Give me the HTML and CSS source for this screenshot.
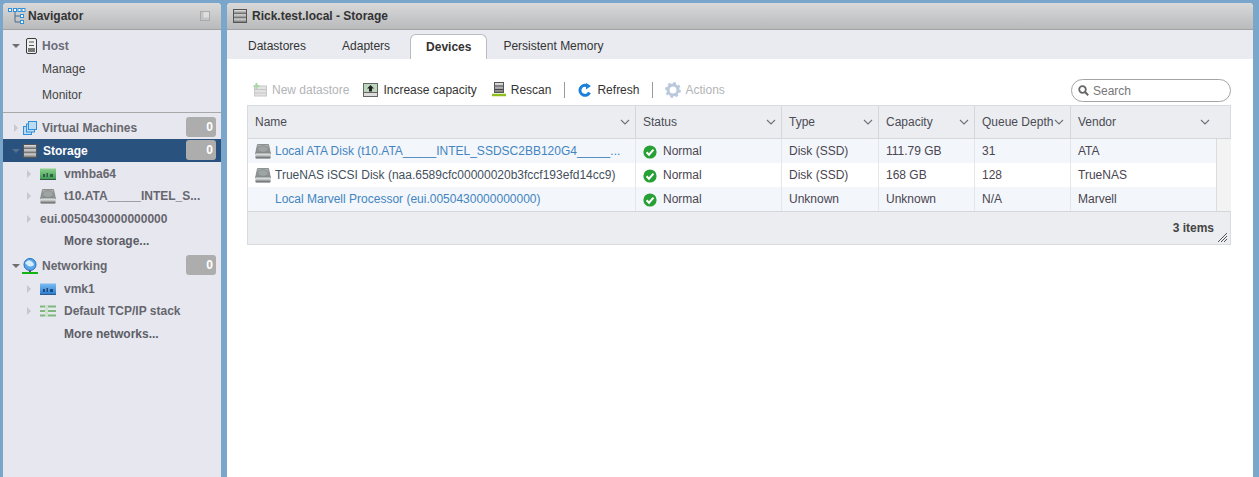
FILE: index.html
```html
<!DOCTYPE html>
<html lang="en">
<head>
<meta charset="utf-8">
<title>Rick.test.local - Storage</title>
<link rel="stylesheet" href="styles.css">
</head>
<body>
<svg class="defs" width="0" height="0" aria-hidden="true">
  <defs>
    <linearGradient id="disk" x1="0" y1="0" x2="0" y2="1"><stop offset="0" stop-color="#aeb3b3"/><stop offset="1" stop-color="#7f8585"/></linearGradient>
    <linearGradient id="diskb" x1="0" y1="0" x2="0" y2="1"><stop offset="0" stop-color="#eceeee"/><stop offset=".35" stop-color="#c9cccc"/><stop offset="1" stop-color="#555b5b"/></linearGradient>
    <linearGradient id="stack" x1="0" y1="0" x2="0" y2="1"><stop offset="0" stop-color="#e6e6e6"/><stop offset="1" stop-color="#7a7a7a"/></linearGradient>
    <linearGradient id="cg" x1="0" y1="0" x2="0" y2="1"><stop offset="0" stop-color="#8fd08f"/><stop offset="1" stop-color="#3f9f55"/></linearGradient>
    <linearGradient id="cb" x1="0" y1="0" x2="0" y2="1"><stop offset="0" stop-color="#7cbcf2"/><stop offset="1" stop-color="#2f7fd0"/></linearGradient>
    <symbol id="i-disk" viewBox="0 0 16 16">
      <path d="M2.500 1.500h11l2 9.500H.5z" fill="url(#disk)" stroke="#7b8080" stroke-width=".8"/>
      <ellipse cx="8" cy="6" rx="5.300" ry="3.300" fill="#9ea3a3" stroke="#83888a" stroke-width=".7"/>
      <rect x=".4" y="10.500" width="15.200" height="5" rx=".8" fill="url(#diskb)"/>
    </symbol>
    <symbol id="i-stack" viewBox="0 0 14 14">
      <rect x=".5" y=".5" width="13" height="13" fill="#666" stroke="#555"/>
      <rect x="1" y="1" width="12" height="3.500" fill="url(#stack)"/>
      <rect x="1" y="5.200" width="12" height="3.500" fill="url(#stack)"/>
      <rect x="1" y="9.400" width="12" height="3.600" fill="url(#stack)"/>
    </symbol>
    <symbol id="i-check" viewBox="0 0 14 14">
      <circle cx="7" cy="7" r="6.600" fill="#27a136"/>
      <path d="M3.600 7.200l2.400 2.500 4.500-5" fill="none" stroke="#fff" stroke-width="2"/>
    </symbol>
    <symbol id="i-caret" viewBox="0 0 10 6">
      <path d="M1 1l4 4 4-4" fill="none" stroke="#6c7378" stroke-width="1.100"/>
    </symbol>
    <symbol id="i-cardg" viewBox="0 0 16 12">
      <rect x="0" y=".5" width="16" height="10.500" fill="url(#cg)"/>
      <path d="M3 9h2V6H3zM6.500 9h1.500V5H6.500zM10 9h3V6h-3z" fill="#2f5f45"/>
      <path d="M0 11.500h16" stroke="#33574a"/>
    </symbol>
    <symbol id="i-cardb" viewBox="0 0 16 12">
      <rect x="0" y=".5" width="16" height="10.500" fill="url(#cb)"/>
      <path d="M3 9h2V6H3zM6.500 9h1.500V5H6.500zM10 9h3V6h-3z" fill="#1e4a80"/>
      <path d="M0 11.500h16" stroke="#2b5b90"/>
    </symbol>
  </defs>
</svg>

<aside class="nav">
  <header class="head nav-head">
    <svg class="head-icon" width="18" height="18" viewBox="0 0 18 18"><g fill="#fff" stroke="#2f8fd8"><rect x=".5" y="1.500" width="3" height="3"/><rect x="5.500" y="1.500" width="3" height="3"/><rect x="10" y="1.500" width="3" height="3"/><rect x="14" y="1.500" width="3" height="3"/><rect x="12.500" y="7.500" width="3" height="3"/><rect x="12.500" y="13.500" width="3" height="3"/></g><path d="M7 5v10h5M7 9h5" fill="none" stroke="#4a6d8c"/></svg>
    <span class="head-title">Navigator</span>
    <svg class="pin" width="10" height="10" viewBox="0 0 10 10"><rect x=".5" y=".5" width="9" height="9" fill="#c4c4c4" stroke="#aaa"/><path d="M3.500 1v5.500H9V1z" fill="#dedede"/></svg>
  </header>

  <section class="host">
    <div class="row h23 top">
      <span class="tri down"></span>
      <svg class="ic" width="11" height="16" viewBox="0 0 11 16"><rect x=".5" y=".5" width="10" height="15" rx="1.500" fill="#eef0f0" stroke="#3a3a3a"/><path d="M3 4h5M3 7.500h5" stroke="#555"/><rect x="2" y="10" width="7" height="4" fill="#777"/></svg>
      <span class="lbl">Host</span>
    </div>
    <div class="sub sub-manage">Manage</div>
    <div class="sub sub-monitor">Monitor</div>
  </section>

  <section class="tree">
    <div class="row h23">
      <span class="tri right"></span>
      <svg class="ic" width="14" height="14" viewBox="0 0 14 14"><g fill="#bcdcf6" stroke="#2f8fd8"><rect x=".5" y="5.500" width="8" height="8"/><rect x="3.500" y="3" width="8" height="8"/><rect x="5.500" y=".5" width="8" height="8"/></g></svg>
      <span class="lbl">Virtual Machines</span>
      <span class="badge">0</span>
    </div>
    <div class="row h23 selected">
      <span class="tri down sel-tri"></span>
      <svg class="ic" width="14" height="14"><use href="#i-stack"/></svg>
      <span class="lbl">Storage</span>
      <span class="badge">0</span>
    </div>
    <div class="row child">
      <span class="tri right"></span>
      <svg class="cic" width="16" height="12"><use href="#i-cardg"/></svg>
      <span class="lbl">vmhba64</span>
    </div>
    <div class="row child">
      <span class="tri right"></span>
      <svg class="cic" width="16" height="16"><use href="#i-disk"/></svg>
      <span class="lbl">t10.ATA_____INTEL_S...</span>
    </div>
    <div class="row child">
      <span class="tri right"></span>
      <span class="lbl">eui.0050430000000000</span>
    </div>
    <div class="row child more">More storage...</div>
    <div class="row h23 net">
      <span class="tri down"></span>
      <svg class="ic globe" width="16" height="16" viewBox="0 0 16 16"><circle cx="8" cy="6.500" r="6" fill="#5aa6ea" stroke="#1f6cc0"/><path d="M3 5q3-4 6-2t3 4q-4 3-7 0z" fill="#d6ecfb"/><path d="M8 12.500v1.500" stroke="#555" stroke-width="2"/><path d="M0 15h16" stroke="#12b312" stroke-width="2"/></svg>
      <span class="lbl">Networking</span>
      <span class="badge">0</span>
    </div>
    <div class="row child">
      <span class="tri right"></span>
      <svg class="cic" width="16" height="12"><use href="#i-cardb"/></svg>
      <span class="lbl">vmk1</span>
    </div>
    <div class="row child">
      <span class="tri right"></span>
      <svg class="cic" width="16" height="14" viewBox="0 0 16 14"><path d="M0 2.500h16M0 7h16M0 11.500h16" stroke="#7fb87f" stroke-width="2.200"/><path d="M6.500 1v12" stroke="#cfe0cf" stroke-width="3"/></svg>
      <span class="lbl">Default TCP/IP stack</span>
    </div>
    <div class="row child more">More networks...</div>
  </section>
</aside>

<main class="main">
  <header class="head main-head">
    <svg class="head-stack" width="14" height="14"><use href="#i-stack"/></svg>
    <span class="head-title">Rick.test.local - Storage</span>
  </header>
  <nav class="tabs">
    <span class="tab">Datastores</span>
    <span class="tab">Adapters</span>
    <span class="tab active">Devices</span>
    <span class="tab">Persistent Memory</span>
  </nav>
  <div class="content">
    <div class="toolbar">
      <span class="tool off tool-new">
        <svg width="14" height="14" viewBox="0 0 14 14"><rect x="1.500" y="3" width="12" height="10" fill="#e2e2e2" stroke="#c8c8c8"/><path d="M2 6.500h11M2 10h11" stroke="#c6c6c6"/><path d="M3.500 0v6M.5 3h6" stroke="#a9d9a9" stroke-width="2"/></svg>
        New datastore
      </span>
      <span class="tool tool-inc">
        <svg width="15" height="14" viewBox="0 0 15 14"><rect x=".5" y=".5" width="14" height="9" fill="#bcd8bc" stroke="#666"/><rect x=".5" y="9.500" width="14" height="4" fill="#ddd" stroke="#666"/><path d="M7.500 2l3.500 3.500H9V8.500H6V5.500H4z" fill="#222"/></svg>
        Increase capacity
      </span>
      <span class="tool">
        <svg width="14" height="15" viewBox="0 0 14 15"><rect x="2.500" y=".5" width="9" height="10" fill="url(#stack)" stroke="#555"/><path d="M3 4h8M3 7.500h8" stroke="#444"/><path d="M0 13h14" stroke="#8fc020" stroke-width="2.500"/></svg>
        Rescan
      </span>
      <span class="sep"></span>
      <span class="tool tool-ref">
        <svg width="15" height="14" viewBox="0 0 15 14"><path d="M11.500 9.500A5 5 0 1 1 8.500 2.500" fill="none" stroke="#1b7fdc" stroke-width="3"/><path d="M8 0l5 3-5 3.500z" fill="#1b7fdc"/></svg>
        Refresh
      </span>
      <span class="sep sep-last"></span>
      <span class="tool off tool-act">
        <svg width="16" height="16" viewBox="0 0 16 16"><circle cx="8" cy="8" r="5" fill="none" stroke="#b9c8dc" stroke-width="3"/><circle cx="8" cy="8" r="6.700" fill="none" stroke="#b9c8dc" stroke-width="2.400" stroke-dasharray="2.600 2.660"/></svg>
        Actions
      </span>
      <label class="search">
        <svg width="11" height="11" viewBox="0 0 11 11"><circle cx="4.500" cy="4.500" r="3.300" fill="none" stroke="#666" stroke-width="1.800"/><path d="M7 7l3.200 3.200" stroke="#666" stroke-width="2"/></svg>
        <span>Search</span>
      </label>
    </div>

    <div class="grid">
      <div class="cols hdr">
        <div class="th">Name<svg width="10" height="6"><use href="#i-caret"/></svg></div>
        <div class="th">Status<svg width="10" height="6"><use href="#i-caret"/></svg></div>
        <div class="th">Type<svg width="10" height="6"><use href="#i-caret"/></svg></div>
        <div class="th">Capacity<svg width="10" height="6"><use href="#i-caret"/></svg></div>
        <div class="th tight">Queue Depth<svg width="10" height="6"><use href="#i-caret"/></svg></div>
        <div class="th last">Vendor<svg width="10" height="6"><use href="#i-caret"/></svg></div>
      </div>
      <div class="cols tr odd">
        <div class="td name"><svg width="16" height="16"><use href="#i-disk"/></svg><a class="link">Local ATA Disk (t10.ATA_____INTEL_SSDSC2BB120G4_____...</a></div>
        <div class="td status"><svg width="14" height="14"><use href="#i-check"/></svg>Normal</div>
        <div class="td">Disk (SSD)</div>
        <div class="td">111.79 GB</div>
        <div class="td">31</div>
        <div class="td">ATA</div>
        <div class="scroll"></div>
      </div>
      <div class="cols tr">
        <div class="td name"><svg width="16" height="16"><use href="#i-disk"/></svg><a class="link plain">TrueNAS iSCSI Disk (naa.6589cfc00000020b3fccf193efd14cc9)</a></div>
        <div class="td status"><svg width="14" height="14"><use href="#i-check"/></svg>Normal</div>
        <div class="td">Disk (SSD)</div>
        <div class="td">168 GB</div>
        <div class="td">128</div>
        <div class="td">TrueNAS</div>
        <div class="scroll"></div>
      </div>
      <div class="cols tr odd">
        <div class="td name noicon"><a class="link">Local Marvell Processor (eui.0050430000000000)</a></div>
        <div class="td status"><svg width="14" height="14"><use href="#i-check"/></svg>Normal</div>
        <div class="td">Unknown</div>
        <div class="td">Unknown</div>
        <div class="td">N/A</div>
        <div class="td">Marvell</div>
        <div class="scroll"></div>
      </div>
      <div class="foot">
        <span>3 items</span>
        <svg class="grip" width="9" height="9" viewBox="0 0 9 9"><path d="M0 9l9-9M3 9l6-6M6 9l3-3" stroke="#555"/></svg>
      </div>
    </div>
  </div>
</main>
</body>
</html>
```

FILE: styles.css
```css
* { box-sizing: border-box; }
html, body { height: 100%; }
body {
  margin: 0;
  height: 477px;
  overflow: hidden;
  display: flex;
  gap: 6px;
  padding: 3px 6px 0 3px;
  background: #7ba6cb;
  font: 12px "Liberation Sans", Arial, sans-serif;
  color: #333;
}
.defs { position: absolute; }

.head {
  height: 27px;
  display: flex;
  align-items: center;
  border-bottom: 1px solid #a2a2a2;
  background: linear-gradient(#d9d9da, #b9babb);
  border-radius: 4px 4px 0 0;
  flex: none;
}
.head-title { font-weight: bold; color: #333; font-size: 12px; }

.nav {
  width: 218px;
  background: #e7e8ef;
  border-radius: 4px 4px 0 0;
  display: flex;
  flex-direction: column;
}
.nav-head { padding-left: 5px; }
.nav-head .head-title { margin-left: 2px; }
.pin { margin-left: auto; margin-right: 11px; }

.host {
  padding-top: 4px;
  height: 83px;
  border-bottom: 1px solid #a8a8a8;
  flex: none;
}
.row {
  display: flex;
  align-items: center;
  height: 22.5px;
  font-weight: bold;
  color: #66666e;
  position: relative;
}
.h23 { height: 23px; padding-left: 9px; }
.lbl { white-space: nowrap; }
.ic { margin: 0 5px 0 3px; flex: none; }
.top .ic { margin: 0 5px 0 6px; }
.top .lbl { color: #6b6b78; }
.sub { padding-left: 39px; height: 26px; line-height: 26px; color: #444; }
.sub-manage { height: 24px; line-height: 24px; }
.sub-monitor { margin-top: 1px; }

.tree { padding-top: 3px; }
.tri { width: 0; height: 0; flex: none; border-style: solid; }
.tri.down { border-width: 4px 4px 0 4px; border-color: #6f6f6f transparent transparent; }
.tri.right { border-width: 4px 0 4px 4px; border-color: transparent transparent transparent #c7c8cc; margin-right: 9px; }
.h23 .tri.right { margin: 0 2px 0 2px; }
.sel-tri { border-top-color: #53708e !important; }

.badge {
  position: absolute;
  right: 5px;
  top: 1px;
  width: 30px;
  height: 20px;
  border-radius: 3px;
  background: #adadad;
  color: #fff;
  text-align: right;
  padding-right: 3px;
  line-height: 20px;
  font-size: 12px;
}
.selected { background: #2a527f; color: #fff; width: 100%; margin-bottom: .5px; }
.selected .lbl { color: #fff; margin-left: 1px; }

.child { padding-left: 24px; }
.cic { margin-right: 8px; flex: none; }
.more { padding-left: 61px; color: #5d5d66; }
.net { margin-top: 1.5px; margin-bottom: .5px; }
.net .ic { margin: 0 4px 0 2px; }

.main {
  flex: 1;
  background: #fff;
  border-radius: 4px 4px 0 0;
  display: flex;
  flex-direction: column;
  min-width: 0;
}
.main-head { padding-left: 6px; height: 27px; }
.head-stack { margin-right: 5px; }
.tabs {
  height: 29px;
  background: #e9ebf0;
  display: flex;
  align-items: flex-end;
  padding-left: 3px;
  flex: none;
}
.tab {
  height: 25px;
  line-height: 25px;
  padding: 0 18px;
  color: #333;
}
.tab.active {
  background: #fff;
  border: 1px solid #b8bcc0;
  border-bottom: none;
  border-radius: 6px 6px 0 0;
  padding: 0 15px;
  line-height: 24px;
  margin: 0 -2px 0 2px;
  font-weight: bold;
  color: #333;
}

.content { padding: 19px 22px 0 20px; flex: 1; }

.toolbar {
  height: 27px;
  display: flex;
  align-items: center;
  padding: 0 0 4px 6px;
  position: relative;
}
.tool { display: inline-flex; align-items: center; gap: 5px; color: #333; margin-right: 13px; white-space: nowrap; }
.tool.off { color: #b2b4b8; }
.tool-new { margin-right: 14px; }
.tool-inc { margin-right: 15px; }
.tool-ref { margin-right: 13px; gap: 4px; }
.tool-act { gap: 4px; }
.sep { width: 1px; height: 16px; background: #9a9a9a; margin: 0 13px 0 0; }
.sep-last { margin-right: 12px; }
.search {
  position: absolute;
  right: 0;
  top: 1px;
  width: 160px;
  height: 23px;
  border: 1px solid #a4a4a4;
  border-radius: 12px;
  display: flex;
  align-items: center;
  gap: 4px;
  padding-left: 6px;
  color: #777;
  background: #fff;
}

.grid { border: 1px solid #d9dbde; background: #fff; width: 984px; }
.cols {
  display: grid;
  grid-template-columns: 388px 146px 97px 96px 96px 146px 14px;
}
.hdr { height: 33px; background: #ebedf0; border-bottom: 1px solid #d4d6d9; }
.th {
  display: flex;
  align-items: center;
  justify-content: space-between;
  padding: 0 5px 0 7px;
  border-right: 1px solid #d4d6d9;
  color: #4b4b55;
}
.th svg { flex: none; }
.th.tight { padding-right: 6px; }
.th.last { grid-column: span 2; border-right: none; padding-right: 21px; }
.tr { height: 24px; background: #fff; }
.tr.odd { background: #f3f6fb; }
.td {
  display: flex;
  align-items: center;
  padding-left: 7px;
  border-right: 1px solid #e4e6ea;
  white-space: nowrap;
  overflow: hidden;
  color: #4a4550;
}
.td.name svg { margin-right: 4px; flex: none; }
.noicon { padding-left: 27px; }
.status svg { margin-right: 6px; margin-top: 2px; flex: none; }
.link { color: #4485bf; }
.link.plain { color: #44505c; }
.scroll { background: #f3f3f3; border-left: 1px solid #d9dbde; margin-left: -1px; }
.foot {
  height: 33px;
  background: #ebedf0;
  border-top: 1px solid #d4d6d9;
  display: flex;
  align-items: center;
  justify-content: flex-end;
  padding-right: 16px;
  font-weight: bold;
  color: #444;
  position: relative;
}
.grip { position: absolute; right: 3px; bottom: 2px; }
```
